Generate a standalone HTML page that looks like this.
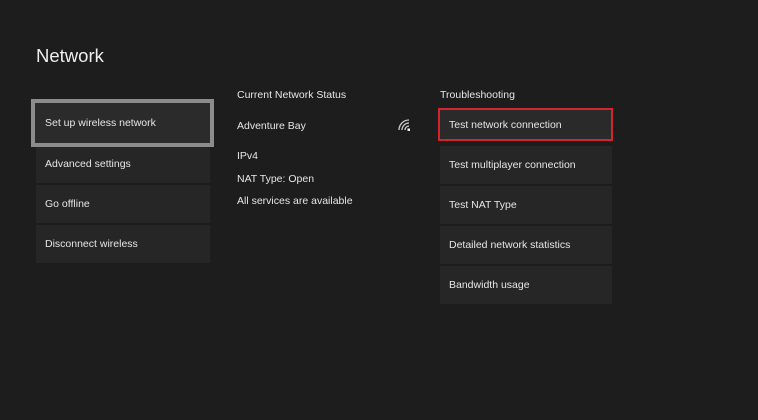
<!DOCTYPE html>
<html><head><style>
body{margin:0;width:758px;height:420px;background:#1d1d1d;font-family:"Liberation Sans",sans-serif;color:#e6e6e6;position:relative;overflow:hidden}
.a{position:absolute;white-space:nowrap}
.t{position:absolute;background:#262626;font-size:10.5px;box-sizing:border-box;padding-left:9px;display:flex;align-items:center}
</style></head><body>
<div class="a" style="left:36px;top:45px;font-size:18.5px;color:#eee">Network</div>
<div class="t" style="left:36px;top:145px;width:174px;height:38px">Advanced settings</div>
<div class="t" style="left:36px;top:185px;width:174px;height:38px">Go offline</div>
<div class="t" style="left:36px;top:225px;width:174px;height:38px">Disconnect wireless</div>
<div class="a" style="left:31px;top:99px;width:175px;height:40px;border:4px solid #8c8c8c;background:#2b2b2b;font-size:10.5px;z-index:2"><span style="position:absolute;left:10px;top:14px">Set up wireless network</span></div>

<div class="a" style="left:237px;top:89px;font-size:10.5px">Current Network Status</div>
<div class="a" style="left:237px;top:120px;font-size:10.5px">Adventure Bay</div>
<svg class="a" style="left:397px;top:118px" width="14" height="14" viewBox="0 0 14 14"><g fill="none" stroke="#ccc" stroke-width="1.3"><path d="M2 12A10 10 0 0 1 12 2"/><path d="M5 12A7 7 0 0 1 12 5"/><path d="M8 12A4 4 0 0 1 12 8"/></g><rect x="10.5" y="10.5" width="2.5" height="2.5" fill="#eee"/></svg>
<div class="a" style="left:237px;top:150px;font-size:10.5px">IPv4</div>
<div class="a" style="left:237px;top:173px;font-size:10.5px">NAT Type: Open</div>
<div class="a" style="left:237px;top:195px;font-size:10.5px">All services are available</div>

<div class="a" style="left:440px;top:89px;font-size:10.5px">Troubleshooting</div>
<div class="t" style="left:438px;top:108px;width:175px;height:33px;border:2px solid #d2262c;background:#2a2a2a;padding-left:9px">Test network connection</div>
<div class="t" style="left:440px;top:146px;width:172px;height:38px">Test multiplayer connection</div>
<div class="t" style="left:440px;top:186px;width:172px;height:38px">Test NAT Type</div>
<div class="t" style="left:440px;top:226px;width:172px;height:38px">Detailed network statistics</div>
<div class="t" style="left:440px;top:266px;width:172px;height:38px">Bandwidth usage</div>
</body></html>
